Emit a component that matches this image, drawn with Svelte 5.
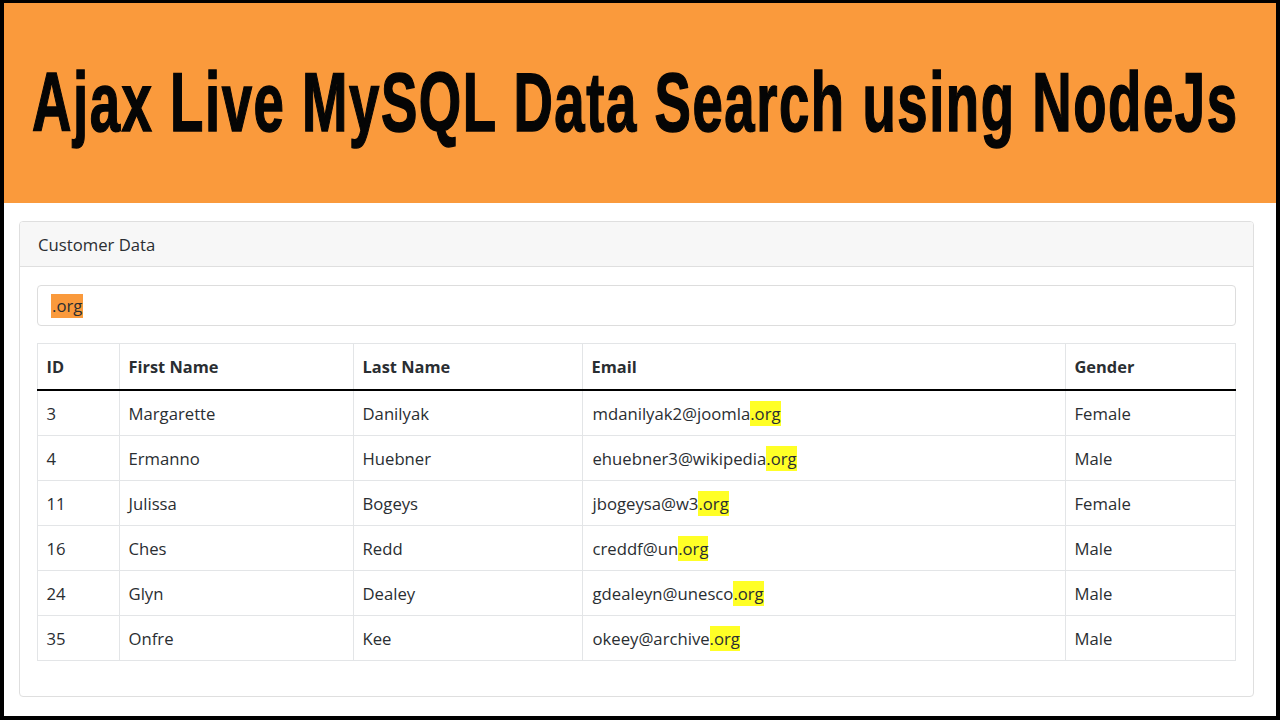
<script>
  const rows = [
    { id: 3, first: 'Margarette', last: 'Danilyak', email: 'mdanilyak2@joomla', gender: 'Female' },
    { id: 4, first: 'Ermanno', last: 'Huebner', email: 'ehuebner3@wikipedia', gender: 'Male' },
    { id: 11, first: 'Julissa', last: 'Bogeys', email: 'jbogeysa@w3', gender: 'Female' },
    { id: 16, first: 'Ches', last: 'Redd', email: 'creddf@un', gender: 'Male' },
    { id: 24, first: 'Glyn', last: 'Dealey', email: 'gdealeyn@unesco', gender: 'Male' },
    { id: 35, first: 'Onfre', last: 'Kee', email: 'okeey@archive', gender: 'Male' }
  ];
</script>

<div class="frame">
  <header class="banner">
    <h1>Ajax Live MySQL Data Search using NodeJs</h1>
  </header>

  <section class="card">
    <div class="card-header">Customer Data</div>
    <div class="card-body">
      <div class="search"><span class="selected">.org</span></div>

      <table>
        <colgroup>
          <col class="c-id" />
          <col class="c-first" />
          <col class="c-last" />
          <col class="c-email" />
          <col />
        </colgroup>
        <thead>
          <tr>
            <th>ID</th>
            <th>First Name</th>
            <th>Last Name</th>
            <th>Email</th>
            <th>Gender</th>
          </tr>
        </thead>
        <tbody>
          {#each rows as row}
            <tr>
              <td>{row.id}</td>
              <td>{row.first}</td>
              <td>{row.last}</td>
              <td class="email">{row.email}<mark>.org</mark></td>
              <td>{row.gender}</td>
            </tr>
          {/each}
        </tbody>
      </table>
    </div>
  </section>
</div>

<style>
  :global(body) {
    margin: 0;
    background: #fff;
  }

  .frame {
    box-sizing: border-box;
    width: 1280px;
    height: 720px;
    border: 4px solid #000;
    border-top-width: 3px;
    background: #fff;
    overflow: hidden;
    font-family: "Open Sans", "Noto Sans", sans-serif;
    font-size: 16.7px;
    color: #2a2e32;
  }

  .banner {
    box-sizing: border-box;
    height: 200px;
    padding: 57px 0 0 28px;
    background: #fa9a3c;
  }

  h1 {
    margin: 0;
    font-family: "Liberation Sans", sans-serif;
    font-size: 84px;
    line-height: 84px;
    font-weight: 700;
    letter-spacing: 2.4px;
    color: #050505;
    white-space: nowrap;
    transform: scaleX(0.649);
    transform-origin: left center;
    -webkit-text-stroke: 1.5px #050505;
  }

  .card {
    box-sizing: border-box;
    height: 476px;
    margin: 18px 22px 0 15px;
    border: 1px solid #dfdfdf;
    border-radius: 4px;
    overflow: hidden;
  }

  .card-header {
    box-sizing: border-box;
    height: 45px;
    padding: 0 18px;
    display: flex;
    align-items: center;
    background: #f7f7f7;
    border-bottom: 1px solid #dfdfdf;
  }

  .card-body {
    padding: 18px 17px;
  }

  .search {
    box-sizing: border-box;
    height: 41px;
    padding: 0 13px;
    display: flex;
    align-items: center;
    border: 1px solid #ddd;
    border-radius: 4px;
  }

  .selected {
    background: #fa9a3c;
    line-height: 24px;
    padding: 0 1px;
  }

  table {
    width: 1199px;
    margin-top: 17px;
    border-collapse: collapse;
    table-layout: fixed;
  }

  .c-id { width: 82px; }
  .c-first { width: 234px; }
  .c-last { width: 229px; }
  .c-email { width: 483px; }

  th, td {
    box-sizing: border-box;
    padding: 1px 8.5px 0;
    border: 1px solid #e3e5e7;
    text-align: left;
    white-space: nowrap;
  }

  th {
    height: 46px;
    font-size: 16.4px;
    font-weight: 700;
    border-bottom: 2px solid #000;
  }

  td {
    height: 45px;
  }

  td.email {
    padding-left: 9.5px;
  }

  tbody tr:first-child td {
    height: 46px;
  }

  mark {
    background: #ffff26;
    color: inherit;
    padding: 1px 0;
  }
</style>
